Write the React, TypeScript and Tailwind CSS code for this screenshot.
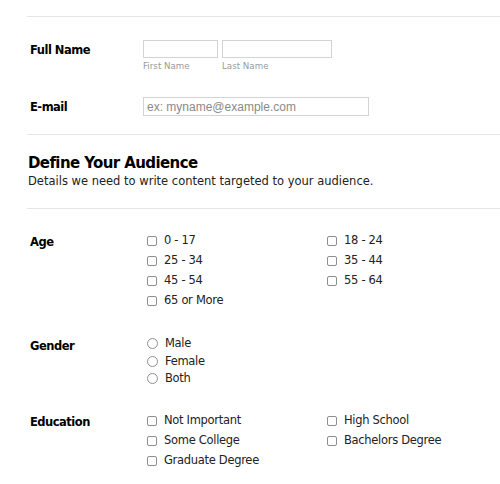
import React from "react";

function Box() {
  return <span className="inline-block w-[10px] h-[10px] border border-[#8e8e8e] rounded-[2px] bg-white shrink-0" />;
}
function Radio() {
  return <span className="inline-block w-[11px] h-[11px] border border-[#8e8e8e] rounded-full bg-white shrink-0" />;
}

function Check({ label }: { label: string }) {
  return (
    <div className="flex items-center h-[20px]">
      <span className="ml-[4px] mr-[7px] flex"><Box /></span>
      <span className="text-[11.5px] tracking-[-0.3px] text-[#222]">{label}</span>
    </div>
  );
}

function Label({ children }: { children: React.ReactNode }) {
  return (
    <div className="w-[113px] shrink-0 pt-[3px] text-[11.5px] tracking-[-0.5px] font-bold text-black leading-[16px]">
      {children}
    </div>
  );
}

export default function App() {
  return (
    <div className="w-[500px] h-[484px] bg-white overflow-hidden" style={{ fontFamily: '"DejaVu Sans", Verdana, sans-serif' }}>
      <div className="pl-[27px]">
        <div className="h-[16px]" />
        <div className="border-t border-[#e6e6e6]" />
        {/* Full name */}
        <div className="flex pt-[22px] pl-[3px]">
          <Label>Full Name</Label>
          <div className="flex gap-[4px] pt-[1px]">
            <div className="flex flex-col">
              <div className="w-[75px] h-[18px] border border-[#d3d3d3]" />
              <span className="text-[8.7px] text-[#9a9a9a] mt-[2px] leading-[12px]">First Name</span>
            </div>
            <div className="flex flex-col">
              <div className="w-[110px] h-[18px] border border-[#d3d3d3]" />
              <span className="text-[8.7px] text-[#9a9a9a] mt-[2px] leading-[12px]">Last Name</span>
            </div>
          </div>
        </div>
        {/* Email */}
        <div className="flex pt-[24px] pl-[3px]">
          <Label>E-mail</Label>
          <div
            className="w-[226px] h-[19px] mt-[1px] border border-[#d3d3d3] flex items-center pl-[3px] text-[12px] text-[#8a8a8a]"
            style={{ fontFamily: '"Liberation Sans", Arial, sans-serif' }}
          >
            ex: myname@example.com
          </div>
        </div>
        <div className="h-[18px]" />
        <div className="border-t border-[#e6e6e6]" />
        {/* Heading */}
        <div className="pt-[18px] pl-[1px]">
          <div className="text-[15px] tracking-[-0.6px] font-bold text-black leading-[18px] mt-[1px]">Define Your Audience</div>
          <div className="text-[11.5px] text-[#222] leading-[18px]">Details we need to write content targeted to your audience.</div>
        </div>
        <div className="h-[18px]" />
        <div className="border-t border-[#e6e6e6]" />
        {/* Age */}
        <div className="flex pt-[22px] pl-[3px]">
          <Label>Age</Label>
          <div className="grid grid-cols-[180px_150px]">
            <Check label="0 - 17" />
            <Check label="18 - 24" />
            <Check label="25 - 34" />
            <Check label="35 - 44" />
            <Check label="45 - 54" />
            <Check label="55 - 64" />
            <Check label="65 or More" />
          </div>
        </div>
        {/* Gender */}
        <div className="flex pt-[24px] pl-[3px]">
          <Label>Gender</Label>
          <div className="flex flex-col">
            {["Male", "Female", "Both"].map((g) => (
              <div key={g} className="flex items-center h-[17.5px]">
                <span className="ml-[4px] mr-[7px] flex"><Radio /></span>
                <span className="text-[11.5px] tracking-[-0.3px] text-[#222]">{g}</span>
              </div>
            ))}
          </div>
        </div>
        {/* Education */}
        <div className="flex pt-[23px] pl-[3px]">
          <Label>Education</Label>
          <div className="grid grid-cols-[180px_150px]">
            <Check label="Not Important" />
            <Check label="High School" />
            <Check label="Some College" />
            <Check label="Bachelors Degree" />
            <Check label="Graduate Degree" />
          </div>
        </div>
      </div>
    </div>
  );
}
